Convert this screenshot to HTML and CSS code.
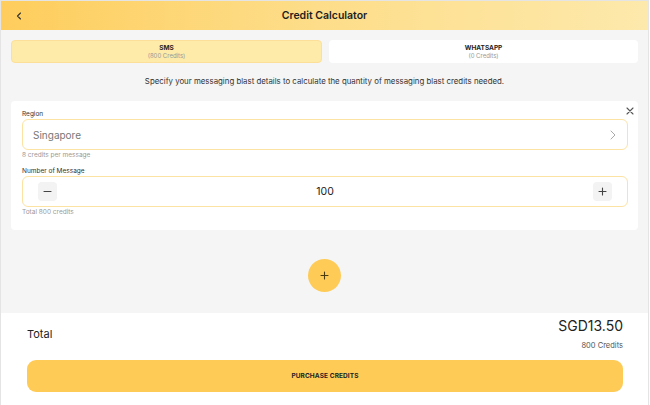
FILE: index.html
```html
<!DOCTYPE html>
<html>
<head>
<meta charset="utf-8">
<link rel="stylesheet" href="styles.css">
</head>
<body>
<div class="app">
  <header class="topbar">
    <span class="back">
      <svg width="8" height="8" viewBox="0 0 8 8"><path d="M5.5 1 L2.5 4 L5.5 7" fill="none" stroke="#333" stroke-width="1.1" stroke-linecap="round" stroke-linejoin="round"/></svg>
    </span>
    <h1 class="title">Credit Calculator</h1>
  </header>
  <main class="body">
    <div class="tabs">
      <div class="tab active">
        <div class="tab-name">SMS</div>
        <div class="tab-sub">(800 Credits)</div>
      </div>
      <div class="tab">
        <div class="tab-name">WHATSAPP</div>
        <div class="tab-sub">(0 Credits)</div>
      </div>
    </div>
    <p class="desc">Specify your messaging blast details to calculate the quantity of messaging blast credits needed.</p>
    <section class="card">
      <span class="close">
        <svg width="8" height="8" viewBox="0 0 8 8"><path d="M1 1 L7 7 M7 1 L1 7" stroke="#555" stroke-width="1.1" stroke-linecap="round"/></svg>
      </span>
      <div class="label">Region</div>
      <div class="field select">
        <span class="placeholder">Singapore</span>
        <svg width="8" height="10" viewBox="0 0 8 10"><path d="M2 1 L6 5 L2 9" fill="none" stroke="#aaa" stroke-width="1" stroke-linecap="round" stroke-linejoin="round"/></svg>
      </div>
      <div class="hint">8 credits per message</div>
      <div class="label">Number of Message</div>
      <div class="field stepper">
        <span class="step-btn">
          <svg width="9" height="9" viewBox="0 0 9 9"><path d="M1 4.5 H8" stroke="#444" stroke-width="1.1" stroke-linecap="round"/></svg>
        </span>
        <span class="value">100</span>
        <span class="step-btn">
          <svg width="9" height="9" viewBox="0 0 9 9"><path d="M1 4.5 H8 M4.5 1 V8" stroke="#444" stroke-width="1.1" stroke-linecap="round"/></svg>
        </span>
      </div>
      <div class="hint">Total 800 credits</div>
    </section>
    <div class="add-row">
      <span class="fab">
        <svg width="9" height="9" viewBox="0 0 9 9"><path d="M1 4.5 H8 M4.5 1 V8" stroke="#4a3b10" stroke-width="1.1" stroke-linecap="round"/></svg>
      </span>
    </div>
  </main>
  <footer class="footer">
    <div class="totals">
      <span class="total-label">Total</span>
      <div class="amount">
        <div class="price">SGD13.50</div>
        <div class="credits">800 Credits</div>
      </div>
    </div>
    <button class="purchase">PURCHASE CREDITS</button>
  </footer>
</div>
</body>
</html>
```

FILE: styles.css
```css
* { box-sizing: border-box; }
html, body {
  margin: 0;
  padding: 0;
  background: #ffffff;
}
body {
  font-family: Inter, "Noto Sans", "Liberation Sans", sans-serif;
  color: #222;
}
.app {
  width: 649px;
  height: 405px;
  border: 1px solid #e4e4e4;
  border-bottom: none;
  display: flex;
  flex-direction: column;
  background: #fff;
  overflow: hidden;
}
.topbar {
  height: 29px;
  flex: none;
  background: linear-gradient(90deg, #fecd5c 0%, #fddb83 40%, #fde9ac 100%);
  display: flex;
  align-items: center;
  justify-content: center;
  position: relative;
}
.back {
  position: absolute;
  left: 14px;
  top: 11px;
  display: flex;
}
.title {
  margin: 0;
  font-size: 10.5px;
  font-weight: 600;
  color: #1e1e1e;
}
.body {
  background: #f5f5f5;
  height: 283px;
  flex: none;
  padding: 10px 10px 0 10px;
}
.tabs {
  display: flex;
  gap: 7px;
}
.tab {
  flex: 1;
  height: 23px;
  border-radius: 4px;
  background: #fff;
  display: flex;
  flex-direction: column;
  align-items: center;
  justify-content: center;
  line-height: 8px;
}
.tab.active {
  background: #feeaa9;
  border: 1px solid #fce09a;
}
.tab-name {
  font-size: 6.5px;
  font-weight: 700;
  color: #222;
}
.tab-sub {
  font-size: 6px;
  color: #999;
}
.desc {
  margin: 12px 0 0 0;
  text-align: center;
  font-size: 7.85px;
  color: #333;
  line-height: 12px;
}
.card {
  margin-top: 14px;
  background: #fff;
  border-radius: 4px;
  padding: 9px 10px 14px 11px;
  position: relative;
}
.close {
  position: absolute;
  right: 4px;
  top: 6px;
  display: flex;
}
.label {
  font-size: 6.5px;
  color: #333;
  line-height: 9px;
}
.field {
  height: 31px;
  border: 1px solid #fde3a3;
  border-radius: 6px;
  display: flex;
  align-items: center;
}
.select {
  padding: 0 10px 0 10px;
  justify-content: space-between;
}
.placeholder {
  font-size: 10px;
  color: #777;
}
.hint {
  font-size: 6.5px;
  color: #999;
  line-height: 8px;
  margin-top: 1px;
  margin-bottom: 8px;
}
.hint:last-child { margin-bottom: 0; }
.stepper {
  padding: 0 15px;
  justify-content: space-between;
}
.step-btn {
  width: 19px;
  height: 19px;
  border-radius: 4px;
  background: #f3f3f3;
  display: flex;
  align-items: center;
  justify-content: center;
}
.value {
  font-size: 10.5px;
  color: #222;
}
.add-row {
  display: flex;
  justify-content: center;
  margin-top: 29px;
}
.fab {
  width: 33px;
  height: 33px;
  border-radius: 50%;
  background: #fecb57;
  display: flex;
  align-items: center;
  justify-content: center;
}
.footer {
  flex: 1;
  background: #fff;
  padding: 5px 25px 0 26px;
}
.totals {
  display: flex;
  justify-content: space-between;
  align-items: flex-start;
}
.total-label {
  margin-top: 9px;
  font-size: 11px;
  color: #222;
}
.amount {
  text-align: right;
}
.price {
  font-size: 14px;
  color: #222;
  line-height: 16px;
}
.credits {
  font-size: 7.5px;
  color: #555;
  margin-top: 7px;
  line-height: 10px;
}
.purchase {
  margin-top: 9px;
  width: 100%;
  height: 32px;
  border: none;
  border-radius: 9px;
  background: #fecb57;
  font-family: Inter, "Noto Sans", "Liberation Sans", sans-serif;
  font-size: 6.5px;
  font-weight: 700;
  color: #222;
  letter-spacing: 0.1px;
}
```
